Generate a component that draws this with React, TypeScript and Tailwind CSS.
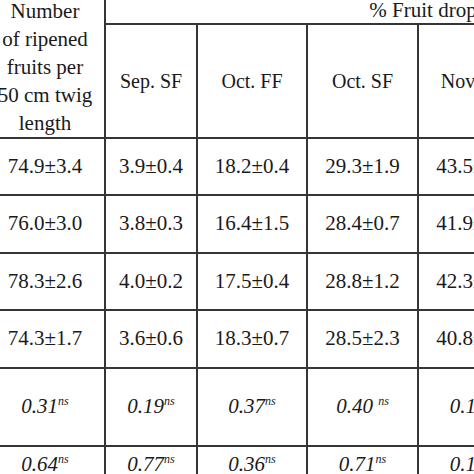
import React from 'react';

const headers = ['Sep. SF', 'Oct. FF', 'Oct. SF', 'Nov. FF', 'Nov. SF', 'Dec. FF'];

const rows = [
  ['74.9±3.4', '3.9±0.4', '18.2±0.4', '29.3±1.9', '43.5±2.2', '55.1±2.0', '68.4±1.8'],
  ['76.0±3.0', '3.8±0.3', '16.4±1.5', '28.4±0.7', '41.9±1.6', '54.3±1.1', '67.2±2.4'],
  ['78.3±2.6', '4.0±0.2', '17.5±0.4', '28.8±1.2', '42.3±1.4', '53.8±1.7', '66.9±1.3'],
  ['74.3±1.7', '3.6±0.6', '18.3±0.7', '28.5±2.3', '40.8±1.9', '52.6±2.1', '65.7±1.5'],
];

const stats = [
  [['0.31', false], ['0.19', false], ['0.37', false], ['0.40', true], ['0.12', false], ['0.28', false], ['0.33', false]],
  [['0.64', false], ['0.77', false], ['0.36', false], ['0.71', false], ['0.15', false], ['0.52', false], ['0.47', false]],
] as [string, boolean][][];

const font = { fontFamily: '"Liberation Serif", "Times New Roman", serif' };

function Stat({ v, gap }: { v: string; gap: boolean }) {
  return (
    <span className="italic">
      {v}
      {gap ? ' ' : ''}
      <span className="text-[12px] relative -top-[8px]">ns</span>
    </span>
  );
}

export default function App() {
  return (
    <div className="w-[474px] h-[474px] overflow-hidden bg-white text-[#1a1a1a]" style={font}>
      <div className="-ml-[16px] -mt-[5px] w-max bg-[#353535] p-[2px] grid gap-[2px] grid-cols-[118px_90px_108px_109px_109px_109px_109px] grid-rows-[26px_112px_55px_56px_55px_56px_76px_40px] text-[21px]">
        <div className="row-span-2 bg-white flex items-center justify-center text-center leading-[28px]">
          <div>
            Number
            <br />
            of ripened
            <br />
            fruits per
            <br />
            50 cm twig
            <br />
            length
          </div>
        </div>
        <div className="col-span-6 bg-white flex items-center justify-center pr-[10px] leading-none">% Fruit drop</div>
        {headers.map((h) => (
          <div key={h} className="bg-white flex items-center justify-center text-[20px]">
            {h}
          </div>
        ))}
        {rows.map((r, i) =>
          r.map((c, j) => (
            <div key={`${i}-${j}`} className="bg-white flex items-center justify-center">
              {c}
            </div>
          ))
        )}
        {stats.map((r, i) =>
          r.map(([v, g], j) => (
            <div key={`s${i}-${j}`} className={`bg-white flex justify-center ${i === 1 ? 'items-start pt-[2px]' : 'items-center'}`}>
              <Stat v={v} gap={g} />
            </div>
          ))
        )}
      </div>
    </div>
  );
}
